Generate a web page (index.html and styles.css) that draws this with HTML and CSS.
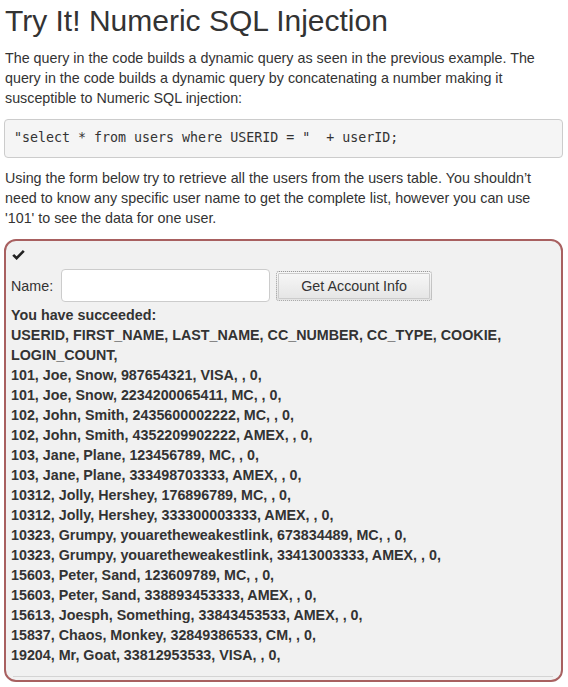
FILE: index.html
```html
<!DOCTYPE html>
<html lang="en">
<head>
  <meta charset="UTF-8">
  <title>Numeric SQL Injection</title>
  <link rel="stylesheet" href="styles.css">
</head>
<body>

  <div class="lesson">
    <h2>Try It! Numeric SQL Injection</h2>
    <p>The query in the code builds a dynamic query as seen in the previous example. The query in the code builds a dynamic query by concatenating a number making it susceptible to Numeric SQL injection:</p>

    <pre>"select * from users where USERID = "  + userID;</pre>

    <p>Using the form below try to retrieve all the users from the users table. You shouldn’t need to know any specific user name to get the complete list, however you can use '101' to see the data for one user.</p>

    <div class="attack-box">
      <div class="check">
        <svg width="13" height="11" viewBox="0 0 13 11">
          <path d="M1.2 5.8 L4.6 9.2 L11.8 1.8" fill="none" stroke="#222" stroke-width="2.6" stroke-linejoin="miter"/>
        </svg>
      </div>
      <form class="attack-form">
        <label for="name">Name:</label>
        <input type="text" id="name" class="name-input">
        <button type="button" class="btn-submit">Get Account Info</button>
      </form>
      <div class="output">
        You have succeeded:<br>
        USERID, FIRST_NAME, LAST_NAME, CC_NUMBER, CC_TYPE, COOKIE, LOGIN_COUNT, <br>
        101, Joe, Snow, 987654321, VISA, , 0, <br>
        101, Joe, Snow, 2234200065411, MC, , 0, <br>
        102, John, Smith, 2435600002222, MC, , 0, <br>
        102, John, Smith, 4352209902222, AMEX, , 0, <br>
        103, Jane, Plane, 123456789, MC, , 0, <br>
        103, Jane, Plane, 333498703333, AMEX, , 0, <br>
        10312, Jolly, Hershey, 176896789, MC, , 0, <br>
        10312, Jolly, Hershey, 333300003333, AMEX, , 0, <br>
        10323, Grumpy, youaretheweakestlink, 673834489, MC, , 0, <br>
        10323, Grumpy, youaretheweakestlink, 33413003333, AMEX, , 0, <br>
        15603, Peter, Sand, 123609789, MC, , 0, <br>
        15603, Peter, Sand, 338893453333, AMEX, , 0, <br>
        15613, Joesph, Something, 33843453533, AMEX, , 0, <br>
        15837, Chaos, Monkey, 32849386533, CM, , 0, <br>
        19204, Mr, Goat, 33812953533, VISA, , 0, <br>
      </div>
      <hr class="box-rule">
    </div>
  </div>

</body>
</html>
```

FILE: styles.css
```css
body {
  margin: 0;
  font-family: "Liberation Sans", Arial, sans-serif;
  font-size: 14.3px;
  line-height: 20px;
  color: #333;
  background: #fff;
}

.lesson {
  padding: 0 5px 0 4px;
}

h2 {
  font-size: 30px;
  font-weight: 400;
  line-height: 33px;
  margin: 4px 0 11px 1px;
}

p {
  margin: 0 14px 11px 1px;
}

pre {
  font-family: "DejaVu Sans Mono", monospace;
  font-size: 13.3px;
  line-height: 18px;
  background: #f5f5f5;
  border: 1px solid #ccc;
  border-radius: 4px;
  padding: 9px 9px 10px;
  margin: 0 0 10px;
}

.attack-box {
  background: #f1f1f1;
  border: 2px solid #a86060;
  border-radius: 12px;
  padding: 4px 6px 3px 5px;
  margin-top: 11px;
}

.check {
  height: 18px;
  display: flex;
  align-items: center;
  padding-left: 1px;
}

.attack-form {
  display: flex;
  align-items: center;
  margin: 6px 0 3px;
}

.attack-form label {
  margin: 0 8px 0 0;
}

.name-input {
  width: 209px;
  height: 33px;
  box-sizing: border-box;
  border: 1px solid #ccc;
  border-radius: 4px;
  background: #fff;
}

.btn-submit {
  margin-left: 6px;
  width: 156px;
  height: 30px;
  font-family: "Liberation Sans", Arial, sans-serif;
  font-size: 14.3px;
  color: #333;
  background: linear-gradient(#f8f8f8, #e4e4e4);
  border: 1px dotted #999;
  outline: 1px solid #ccc;
  outline-offset: -3px;
  border-radius: 3px;
}

.output {
  font-weight: 700;
}

.box-rule {
  border: 0;
  border-top: 1px solid #d4d4d4;
  margin: 11px 2px 0;
}
```
